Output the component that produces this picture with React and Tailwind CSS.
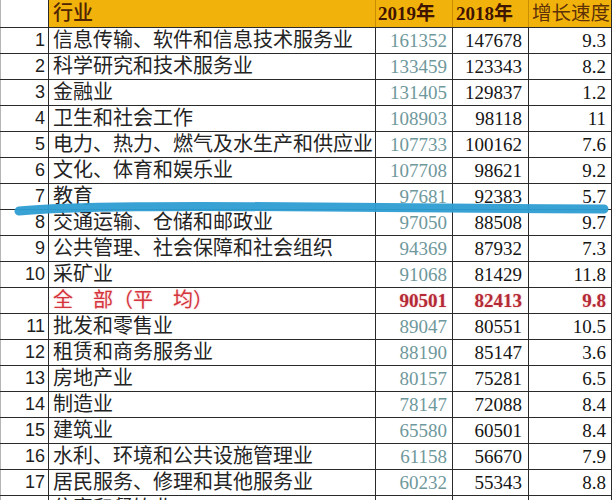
import React from "react";

const rows = [
  ["1", "信息传输、软件和信息技术服务业", "161352", "147678", "9.3"],
  ["2", "科学研究和技术服务业", "133459", "123343", "8.2"],
  ["3", "金融业", "131405", "129837", "1.2"],
  ["4", "卫生和社会工作", "108903", "98118", "11"],
  ["5", "电力、热力、燃气及水生产和供应业", "107733", "100162", "7.6"],
  ["6", "文化、体育和娱乐业", "107708", "98621", "9.2"],
  ["7", "教育", "97681", "92383", "5.7"],
  ["8", "交通运输、仓储和邮政业", "97050", "88508", "9.7"],
  ["9", "公共管理、社会保障和社会组织", "94369", "87932", "7.3"],
  ["10", "采矿业", "91068", "81429", "11.8"],
  ["", "全　部（平　均）", "90501", "82413", "9.8", true],
  ["11", "批发和零售业", "89047", "80551", "10.5"],
  ["12", "租赁和商务服务业", "88190", "85147", "3.6"],
  ["13", "房地产业", "80157", "75281", "6.5"],
  ["14", "制造业", "78147", "72088", "8.4"],
  ["15", "建筑业", "65580", "60501", "8.4"],
  ["16", "水利、环境和公共设施管理业", "61158", "56670", "7.9"],
  ["17", "居民服务、修理和其他服务业", "60232", "55343", "8.8"],
  ["18", "住宿和餐饮业", "50346", "48260", "4.3"],
];

const sans = "font-['Liberation_Sans','Noto_Sans_CJK_SC',sans-serif]";
const serif = "font-['Liberation_Serif','Noto_Sans_CJK_SC',serif]";
const cols = "grid grid-cols-[49px_327px_77px_76px_83px] w-[612px]";

function Row({ r }) {
  const [no, name, y19, y18, growth, avg] = r;
  return (
    <div className={`${cols} h-[26px] border-b border-[#2a2a2a] leading-[25px]`}>
      <div className={`${sans} text-[18px] text-[#1e1e1e] text-right pr-[3px] border-r border-[#2a2a2a] border-l border-l-[#b5b5b5]`}>
        {no}
      </div>
      <div
        className={`${sans} text-[20px] pl-[4px] whitespace-nowrap overflow-hidden border-r border-[#2a2a2a] ${
          avg ? "text-[#d4343c] [text-shadow:0_0_2px_#f4b6b6]" : "text-[#242424]"
        }`}
      >
        {name}
      </div>
      <div
        className={`${serif} text-[19px] text-right pr-[5px] border-r border-[#2a2a2a] ${
          avg ? "font-bold text-[#b32a36] [text-shadow:0_0_2px_#f4b6b6]" : "text-[#6f989c]"
        }`}
      >
        {y19}
      </div>
      <div
        className={`${serif} text-[19px] text-right pr-[6px] border-r border-[#2a2a2a] ${
          avg ? "font-bold text-[#b32a36] [text-shadow:0_0_2px_#f4b6b6]" : "text-[#151515]"
        }`}
      >
        {y18}
      </div>
      <div
        className={`${serif} text-[19px] text-right pr-[5px] border-r border-[#2a2a2a] ${
          avg ? "font-bold text-[#b32a36] [text-shadow:0_0_2px_#f4b6b6]" : "text-[#151515]"
        }`}
      >
        {growth}
      </div>
    </div>
  );
}

export default function App() {
  return (
    <div className="relative w-[616px] h-[500px] overflow-hidden bg-white">
      {/* header */}
      <div className={`${cols} h-[28px] border-b border-[#2a2a2a] leading-[27px]`}>
        <div className="bg-white border-r border-[#2a2a2a] border-l border-l-[#b5b5b5]" />
        <div className={`${sans} bg-[#f2b20c] text-[20px] font-medium text-[#4f2600] pl-[4px] border-r border-[#c98d00]`}>
          行业
        </div>
        <div className={`${serif} bg-[#f2b20c] text-[19px] font-bold text-[#3f1400] pl-[2px] border-r border-[#c98d00]`}>
          2019年
        </div>
        <div className={`${serif} bg-[#f2b20c] text-[19px] font-bold text-[#3f1400] pl-[3px] border-r border-[#c98d00]`}>
          2018年
        </div>
        <div className={`${sans} bg-[#f2b20c] text-[19.5px] text-[#5e3206] pl-[3px] border-r border-[#2a2a2a]`}>
          增长速度
        </div>
      </div>

      {rows.map((r, i) => (
        <Row key={i} r={r} />
      ))}

      {/* hand-drawn highlight stroke */}
      <svg className="absolute left-0 top-0 pointer-events-none" width="616" height="500">
        <path
          d="M19 211 C 70 206, 180 206, 320 207 S 520 209, 604 209"
          fill="none"
          stroke="#2d9dd3"
          strokeWidth="9"
          strokeLinecap="round"
          opacity="0.95"
        />
      </svg>
    </div>
  );
}
